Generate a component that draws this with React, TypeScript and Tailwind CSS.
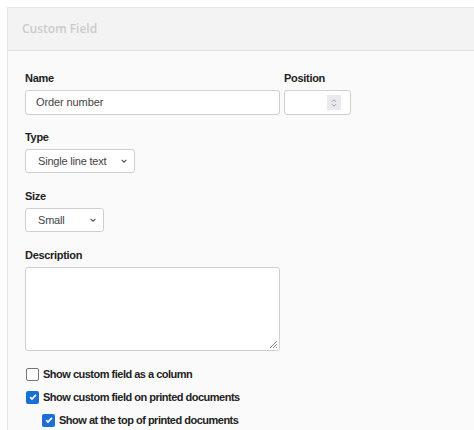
import React from "react";

const Label: React.FC<{ children: React.ReactNode }> = ({ children }) => (
  <label className="block text-[11px] font-bold leading-[14px] tracking-[-0.3px] text-[#222] mb-[5px]">
    {children}
  </label>
);

const Chevron = () => (
  <svg className="h-[8px] w-[8px] text-[#555]" viewBox="0 0 10 10" fill="none" stroke="currentColor" strokeWidth="1.4">
    <path d="M2 3.5l3 3 3-3" />
  </svg>
);

const SelectBox: React.FC<{ value: string; width: string }> = ({ value, width }) => (
  <div
    className={`${width} h-[24px] flex items-center justify-between rounded-[3px] border border-[#cfcfcf] bg-white pl-[12px] pr-[6px] text-[11px] tracking-[-0.2px] text-[#444]`}
  >
    <span>{value}</span>
    <Chevron />
  </div>
);

const CheckBox: React.FC<{ checked?: boolean }> = ({ checked }) =>
  checked ? (
    <span className="flex h-[13px] w-[13px] items-center justify-center rounded-[2px] bg-[#1a6fd6]">
      <svg viewBox="0 0 12 12" className="h-[10px] w-[10px]" fill="none" stroke="white" strokeWidth="2">
        <path d="M2.5 6.2l2.3 2.3 4.7-5" />
      </svg>
    </span>
  ) : (
    <span className="block h-[13px] w-[13px] rounded-[2px] border border-[#767676] bg-white" />
  );

export default function App() {
  return (
    <div className="min-h-[430px] bg-white pl-[7px] pt-[7px] font-['Liberation_Sans',Arial,sans-serif]">
      <div className="border-l border-t border-[#e6e6e6] bg-[#fafafa] min-h-[423px]">
        {/* header */}
        <div className="h-[43px] flex items-center border-b border-[#e4e4e4] bg-[#f3f3f3] pl-[14px]">
          <span className="font-['Open_Sans',sans-serif] text-[12px] font-semibold text-[#cbcbcb]">
            Custom Field
          </span>
        </div>

        <div className="pl-[17px] pt-[20px]">
          <div className="flex gap-[4px]">
            <div>
              <Label>Name</Label>
              <div className="w-[255px] h-[25px] flex items-center rounded-[3px] border border-[#cfcfcf] bg-white pl-[10px] text-[11px] tracking-[-0.1px] text-[#444]">
                Order number
              </div>
            </div>
            <div>
              <Label>Position</Label>
              <div className="w-[67px] h-[25px] flex items-center justify-end rounded-[3px] border border-[#cfcfcf] bg-white pr-[9px]">
                <span className="flex h-[15px] w-[14px] flex-col items-center justify-center bg-[#e9e9ee]">
                  <svg viewBox="0 0 10 12" className="h-[12px] w-[8px]" fill="none" stroke="#888" strokeWidth="1">
                    <path d="M2.5 4.5L5 2l2.5 2.5M2.5 7.5L5 10l2.5-2.5" />
                  </svg>
                </span>
              </div>
            </div>
          </div>

          <div className="mt-[15px]">
            <Label>Type</Label>
            <SelectBox value="Single line text" width="w-[110px]" />
          </div>

          <div className="mt-[16px]">
            <Label>Size</Label>
            <SelectBox value="Small" width="w-[79px]" />
          </div>

          <div className="mt-[16px]">
            <Label>Description</Label>
            <div className="relative w-[255px] h-[84px] rounded-[3px] border border-[#cfcfcf] bg-white">
              <svg viewBox="0 0 10 10" className="absolute bottom-[1px] right-[1px] h-[10px] w-[10px]" stroke="#888" strokeWidth="1">
                <path d="M9 2L2 9M9 5L5 9M9 8L8 9" />
              </svg>
            </div>
          </div>

          <div className="mt-[16px] ml-[1px] flex flex-col gap-[9px] text-[11px] font-bold leading-[14px] tracking-[-0.5px] text-[#222]">
            <div className="flex items-center gap-[4px]">
              <CheckBox />
              <span>Show custom field as a column</span>
            </div>
            <div className="flex items-center gap-[4px]">
              <CheckBox checked />
              <span>Show custom field on printed documents</span>
            </div>
            <div className="flex items-center gap-[4px] pl-[16px]">
              <CheckBox checked />
              <span>Show at the top of printed documents</span>
            </div>
          </div>
        </div>
      </div>
    </div>
  );
}
